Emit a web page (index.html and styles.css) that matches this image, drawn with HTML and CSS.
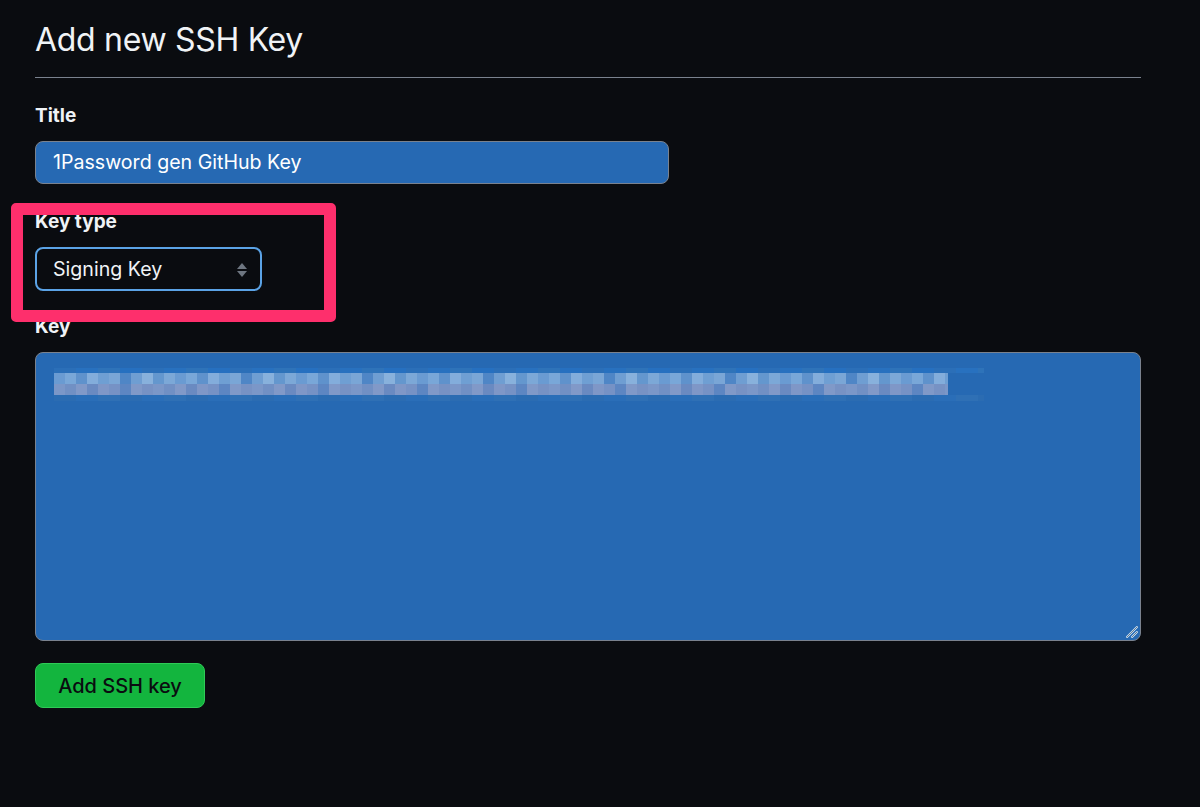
FILE: index.html
```html
<!DOCTYPE html>
<html lang="en">
<head>
<meta charset="utf-8">
<title>Add new SSH Key</title>
<link rel="stylesheet" href="styles.css">
</head>
<body>
<main class="page">
  <h2 class="heading">Add new SSH Key</h2>
  <form class="form">
    <div class="group">
      <label class="label">Title</label>
      <div class="input">1Password gen GitHub Key</div>
    </div>
    <div class="group group-type">
      <label class="label">Key type</label>
      <div class="select">
        <span>Signing Key</span>
        <svg class="arrows" width="12" height="16" viewBox="0 0 12 16"><path d="M6 1 L11 7 H1 Z" fill="#6e7681"/><path d="M6 15 L11 9 H1 Z" fill="#6e7681"/></svg>
      </div>
      <div class="highlight"></div>
    </div>
    <div class="group">
      <label class="label">Key</label>
      <div class="textarea">
        <div class="blur">
          <div class="blur-row r0"></div>
          <div class="blur-row r1"></div>
          <div class="blur-row r2"></div>
          <div class="blur-row r3"></div>
        </div>
        <svg class="grip" width="14" height="14" viewBox="0 0 14 14"><path d="M2 12 L12 2 M7 12 L12 7" stroke="#d0e4f5" stroke-width="2" stroke-linecap="round"/><path d="M2 12 L12 2 M7 12 L12 7" stroke="#1b3550" stroke-width="0.6" stroke-linecap="round"/></svg>
      </div>
    </div>
    <button type="button" class="btn">Add SSH key</button>
  </form>
</main>
</body>
</html>
```

FILE: styles.css
```css
* { box-sizing: border-box; }
html, body { margin: 0; padding: 0; }
body {
  background: #0a0c10;
  color: #f0f3f6;
  font-family: Inter, "Liberation Sans", sans-serif;
  height: 807px;
  overflow: hidden;
}
.page {
  width: 1106px;
  margin-left: 35px;
  padding-top: 18px;
}
.heading {
  margin: 0;
  font-size: 32px;
  font-weight: 400;
  line-height: 44px;
  padding-bottom: 15px;
  border-bottom: 1px solid #7a828e;
  letter-spacing: -0.3px;
}
.form {
  display: flex;
  flex-direction: column;
  padding-top: 26px;
}
.group {
  display: flex;
  flex-direction: column;
  margin-bottom: 26px;
}
.group-type { position: relative; margin-bottom: 24px; }
.label {
  font-size: 19px;
  font-weight: 700;
  line-height: 24px;
  margin-bottom: 13px;
}
.input {
  width: 634px;
  height: 43px;
  background: #2669b3;
  border: 1px solid #7a828e;
  border-radius: 8px;
  color: #ffffff;
  font-size: 19.6px;
  line-height: 41px;
  padding-left: 17px;
}
.select {
  width: 227px;
  height: 44px;
  border: 2px solid #5ba3e6;
  border-radius: 8px;
  background: #0a0c10;
  color: #f0f3f6;
  font-size: 19.6px;
  line-height: 40px;
  padding: 0 12px 0 16px;
  display: flex;
  align-items: center;
  justify-content: space-between;
}
.arrows { margin-top: 1px; }
.highlight {
  position: absolute;
  left: -24px;
  top: -7px;
  width: 325px;
  height: 119px;
  border: 12px solid #fe2f6c;
  border-radius: 5px;
  pointer-events: none;
}
.textarea {
  position: relative;
  width: 1106px;
  height: 289px;
  background: #2669b3;
  border: 1px solid #7a828e;
  border-radius: 8px;
  padding: 15px 0 0 18px;
}
.blur { display: flex; flex-direction: column; }
.blur-row { height: 6px; }
.r0 {
  width: 930px;
  height: 5px;
  background: repeating-linear-gradient(90deg, #2b6fb8 0 22px, #2871bf 22px 44px, #2e73b9 44px 66px, #2670c0 66px 88px);
}
.r1 {
  width: 894px;
  height: 11px;
  background: repeating-linear-gradient(90deg, #6a9bd2 0 11px, #79a7d8 11px 22px, #5f92cc 22px 33px, #83addb 33px 44px, #6f9fd3 44px 55px, #7aa6d6 55px 66px, #4f86c6 66px 77px, #6f9ed2 77px 88px, #88b1dc 88px 99px, #6497ce 99px 110px, #7ca8d7 110px 121px);
}
.r2 {
  width: 894px;
  height: 11px;
  background: repeating-linear-gradient(90deg, #7b97c8 0 11px, #7190c4 11px 22px, #8199c8 22px 33px, #6a8ac1 33px 44px, #7f97c7 44px 55px, #7692c5 55px 66px, #5d86c2 66px 77px, #8099c8 77px 88px, #7792c4 88px 99px);
}
.r3 {
  width: 930px;
  height: 6px;
  background: repeating-linear-gradient(90deg, #2b6cb2 0 22px, #2a6eb8 22px 44px, #2f70b5 44px 66px);
}
.grip {
  position: absolute;
  right: 1px;
  bottom: 1px;
}
.btn {
  align-self: flex-start;
  width: 170px;
  height: 45px;
  margin-top: -4px;
  background: #13b53e;
  border: 1px solid #2fcb57;
  border-radius: 8px;
  color: #0a0c10;
  font-family: Inter, "Liberation Sans", sans-serif;
  font-size: 20px;
  font-weight: 500;
  padding: 0;
}
```
